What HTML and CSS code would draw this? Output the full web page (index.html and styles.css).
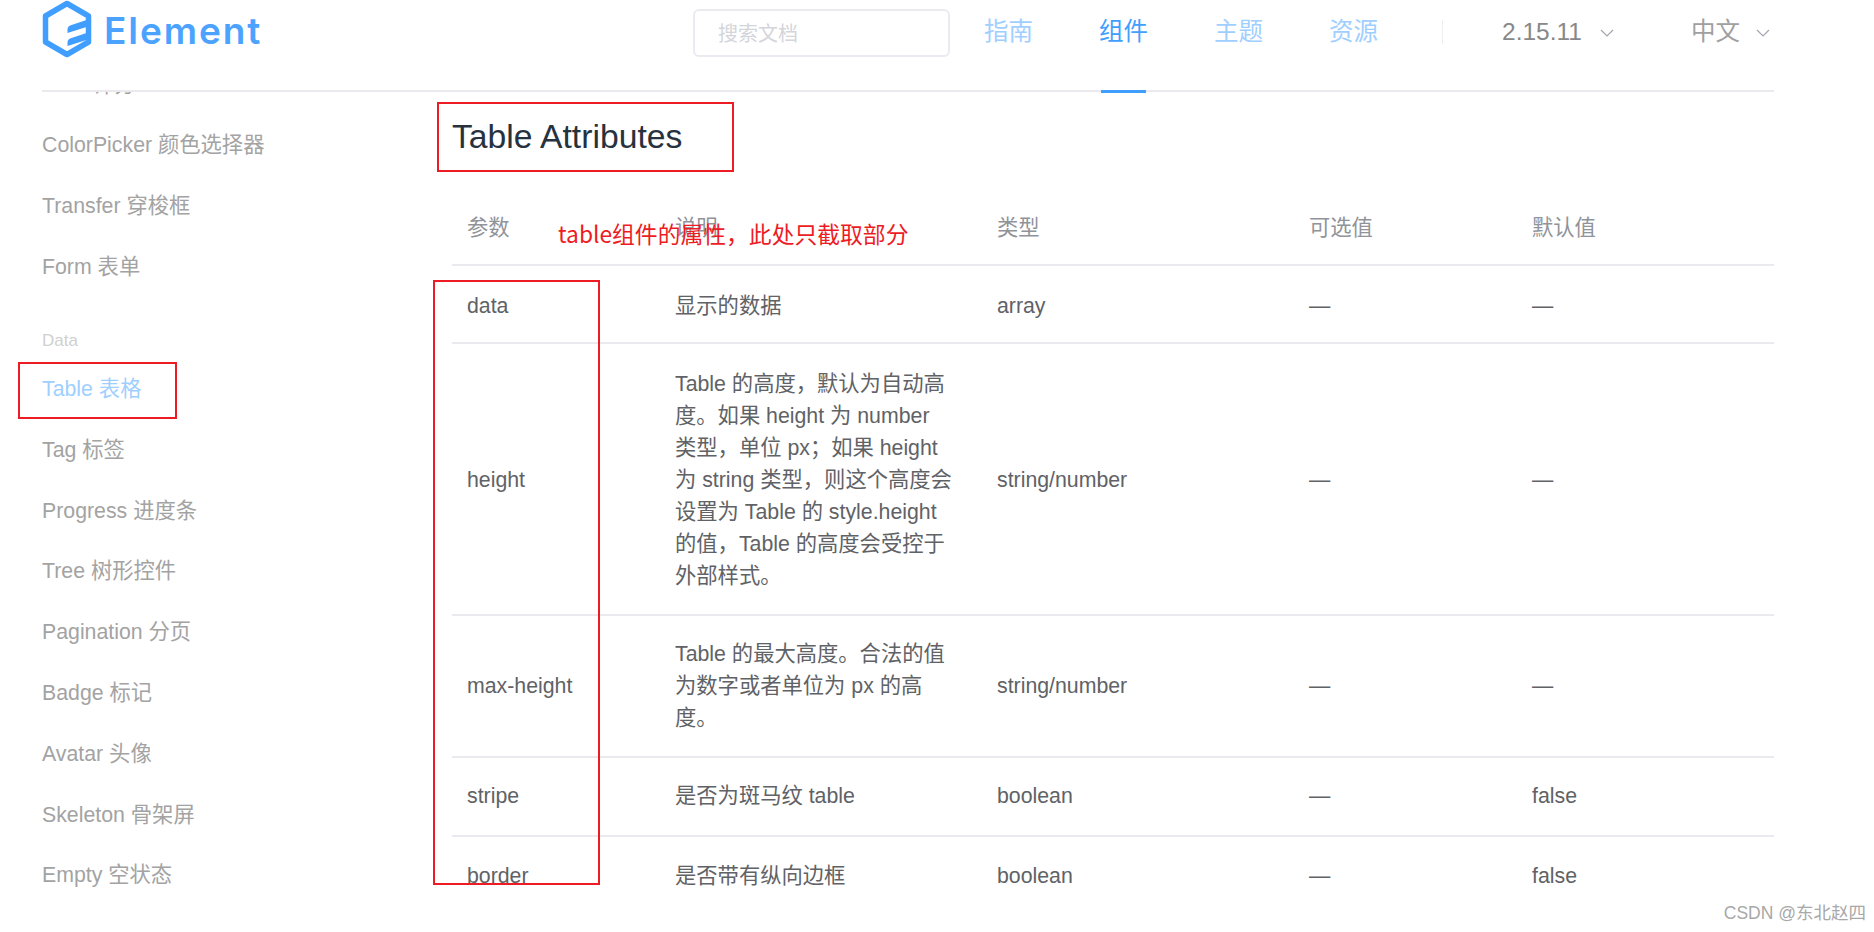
FILE: index.html
```html
<!DOCTYPE html>
<html lang="zh-CN">
<head>
    <meta charset="UTF-8">
    <meta name="viewport" content="width=device-width, initial-scale=1.0">
    <title>Table Attributes</title>
    <link rel="stylesheet" href="styles.css">
</head>
<body>

<!-- Header -->
<div class="header">
    <a href="#" class="logo">
        <svg class="logo-mark" viewBox="0 0 50 58" width="50" height="58">
            <path d="M25 3.5 L46.5 16 V42 L25 54.5 L3.5 42 V16 Z" fill="none" stroke="#409eff" stroke-width="5.5" stroke-linejoin="round"/>
            <path d="M46 19.5 L28 25.5 Q25.5 26.5 25.5 29 V33 L46 26.5 Z M46 32.5 L28 38.5 Q25.5 39.5 25.5 42 V46 L46 39.5 Z" fill="#409eff"/>
        </svg>
        <span class="logo-text">Element</span>
    </a>
    <div class="search">搜索文档</div>
    <a href="#" class="nav-link">指南</a>
    <a href="#" class="nav-link active">组件</a>
    <a href="#" class="nav-link">主题</a>
    <a href="#" class="nav-link">资源</a>
    <span class="nav-sep"></span>
    <span class="version">2.15.11<svg class="caret" viewBox="0 0 14 8" width="14" height="8"><path d="M1 1 L7 7 L13 1" fill="none" stroke="#a3a6ad" stroke-width="1.2"/></svg></span>
    <span class="lang">中文<svg class="caret" viewBox="0 0 14 8" width="14" height="8"><path d="M1 1 L7 7 L13 1" fill="none" stroke="#a3a6ad" stroke-width="1.2"/></svg></span>
</div>

<div class="main">
    <!-- Sidebar -->
    <div class="sidebar">
        <div class="side-list">
            <a href="#" class="side-item">Rate 评分</a>
            <a href="#" class="side-item">ColorPicker 颜色选择器</a>
            <a href="#" class="side-item">Transfer 穿梭框</a>
            <a href="#" class="side-item">Form 表单</a>
            <div class="side-group">Data</div>
            <a href="#" class="side-item current">Table 表格</a>
            <a href="#" class="side-item">Tag 标签</a>
            <a href="#" class="side-item">Progress 进度条</a>
            <a href="#" class="side-item">Tree 树形控件</a>
            <a href="#" class="side-item">Pagination 分页</a>
            <a href="#" class="side-item">Badge 标记</a>
            <a href="#" class="side-item">Avatar 头像</a>
            <a href="#" class="side-item">Skeleton 骨架屏</a>
            <a href="#" class="side-item">Empty 空状态</a>
        </div>
    </div>

    <!-- Content -->
    <div class="content">
        <h3 class="title">Table Attributes</h3>
        <table class="attrs">
            <colgroup>
                <col class="col-name"><col class="col-desc"><col class="col-type"><col class="col-opts"><col>
            </colgroup>
            <thead>
                <tr class="row-head"><th>参数</th><th>说明</th><th>类型</th><th>可选值</th><th>默认值</th></tr>
            </thead>
            <tbody>
                <tr class="row-data"><td>data</td><td>显示的数据</td><td>array</td><td>—</td><td>—</td></tr>
                <tr class="row-height">
                    <td>height</td>
                    <td>Table 的高度，默认为自动高<br>度。如果 height 为 number<br>类型，单位 px；如果 height<br>为 string 类型，则这个高度会<br>设置为 Table 的 style.height<br>的值，Table 的高度会受控于<br>外部样式。</td>
                    <td>string/number</td><td>—</td><td>—</td>
                </tr>
                <tr class="row-max">
                    <td>max-height</td>
                    <td>Table 的最大高度。合法的值<br>为数字或者单位为 px 的高<br>度。</td>
                    <td>string/number</td><td>—</td><td>—</td>
                </tr>
                <tr class="row-short"><td>stripe</td><td>是否为斑马纹 table</td><td>boolean</td><td>—</td><td>false</td></tr>
                <tr class="row-short row-last"><td>border</td><td>是否带有纵向边框</td><td>boolean</td><td>—</td><td>false</td></tr>
            </tbody>
        </table>
    </div>
</div>

<!-- Annotations drawn over the page -->
<div class="mark mark-title"></div>
<div class="mark mark-side"></div>
<div class="mark mark-col"></div>
<div class="note">table组件的属性，此处只截取部分</div>
<div class="watermark">CSDN @东北赵四</div>

</body>
</html>
```

FILE: styles.css
```css
/* General Reset */
* {
    margin: 0;
    padding: 0;
    box-sizing: border-box;
}

html, body {
    height: 100%;
    overflow: hidden;
}

body {
    position: relative;
    background: #fff;
    color: #606266;
    font-family: "Liberation Sans", "Noto Sans CJK SC", sans-serif;
    padding: 0 100px 0 42px;
}

a {
    text-decoration: none;
    color: inherit;
}

/* Header */
.header {
    display: flex;
    align-items: flex-start;
    height: 92px;
    border-bottom: 2px solid #e9e9ee;
}

.logo {
    display: flex;
    align-items: center;
    height: 58px;
    width: 651px;
}

.logo-text {
    margin-left: 12px;
    margin-top: 3px;
    font-family: "Inter", sans-serif;
    font-size: 37px;
    font-weight: 600;
    letter-spacing: 1.9px;
    color: #4ba3ff;
}

.search {
    width: 257px;
    height: 48px;
    margin-top: 9px;
    margin-right: 34px;
    padding: 0 23px;
    border: 2px solid #e9ebf0;
    border-radius: 6px;
    font-size: 20px;
    line-height: 46px;
    color: #d3d5da;
}

.nav-link {
    position: relative;
    width: 49px;
    height: 92px;
    margin-right: 66px;
    font-size: 24.5px;
    line-height: 64px;
    color: #a0cfff;
}

.nav-link.active {
    color: #409eff;
}

.nav-link.active::after {
    content: "";
    position: absolute;
    left: 2px;
    bottom: -1px;
    width: 45px;
    height: 3px;
    background: #409eff;
}

.nav-sep {
    width: 1px;
    height: 24px;
    margin: 20px 59px 0 -2px;
    background: #eeeef2;
}

.version, .lang {
    display: flex;
    align-items: center;
    height: 64px;
    font-size: 24.5px;
    line-height: 64px;
    color: #888;
}

.version {
    width: 189px;
}

.version .caret {
    margin-left: 18px;
}

.lang {
    color: #a0a0a0;
}

.caret {
    margin-left: 16px;
    margin-top: 2px;
}

/* Body */
.main {
    display: flex;
    height: 840px;
}

.sidebar {
    width: 410px;
    flex-shrink: 0;
    overflow: hidden;
}

.side-list {
    margin-top: -37.5px;
}

.side-item {
    display: block;
    height: 60.8px;
    font-size: 21.3px;
    line-height: 60.8px;
    color: #a3a3a3;
}

.side-item.current {
    color: #a0cfff;
}

.side-group {
    height: 61.4px;
    padding-top: 28px;
    font-size: 17px;
    line-height: 30px;
    color: #d0d0d0;
}

.content {
    flex: 1;
    min-width: 0;
}

.title {
    height: 60px;
    font-size: 33.7px;
    font-weight: 400;
    line-height: 88px;
    color: #27323f;
}

.attrs {
    width: 100%;
    margin-top: 35px;
    border-collapse: collapse;
    table-layout: fixed;
    font-size: 21.3px;
}

.col-name { width: 208px; }
.col-desc { width: 322px; }
.col-type { width: 312px; }
.col-opts { width: 223px; }

.attrs th {
    font-weight: 400;
    text-align: left;
    color: #909399;
}

.attrs th, .attrs td {
    padding-left: 15px;
    border-bottom: 2px solid #e9e9ee;
}

.attrs td {
    line-height: 32px;
}

.row-head { height: 78px; }
.row-data { height: 78px; }
.row-height { height: 272px; }
.row-max { height: 142px; }
.row-short { height: 79px; }

.row-data td {
    padding-top: 3px;
}

.row-height td {
    padding-top: 1px;
}

.row-short td {
    padding-bottom: 1px;
}

.attrs .row-last td {
    border-bottom: none;
}

/* Annotations */
.mark {
    position: absolute;
    border: 2px solid #ed1c24;
}

.mark-title {
    left: 437px;
    top: 102px;
    width: 297px;
    height: 70px;
}

.mark-side {
    left: 18px;
    top: 362px;
    width: 159px;
    height: 57px;
}

.mark-col {
    left: 433px;
    top: 280px;
    width: 167px;
    height: 605px;
}

.note {
    position: absolute;
    left: 558px;
    top: 218px;
    font-family: "Noto Sans CJK SC", sans-serif;
    font-size: 22.8px;
    line-height: 32px;
    color: #ed1c24;
}

.watermark {
    position: absolute;
    right: 8px;
    top: 902px;
    font-size: 17.5px;
    line-height: 22px;
    color: #a8a8a8;
}
```
